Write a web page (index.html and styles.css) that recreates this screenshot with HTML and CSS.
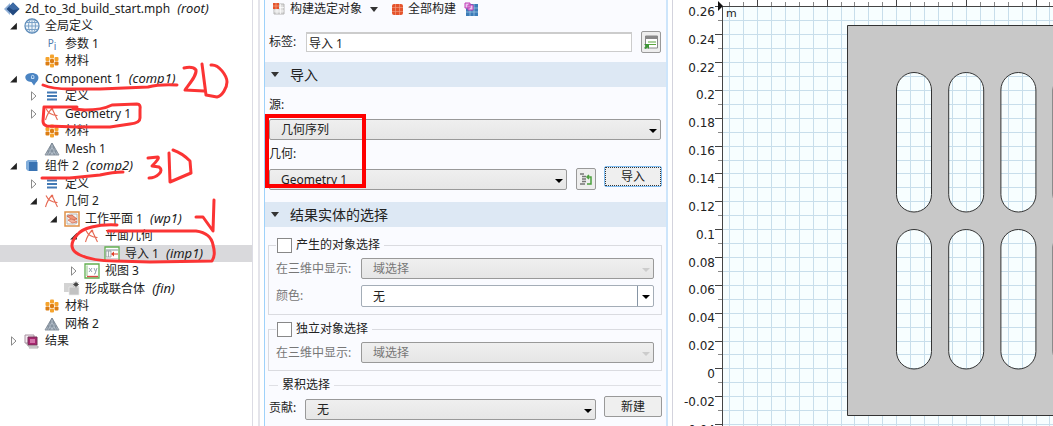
FILE: index.html
```
<!DOCTYPE html>
<html lang="zh-CN">
<head>
<meta charset="utf-8">
<title>2d_to_3d_build_start.mph</title>
<link rel="stylesheet" href="styles.css">
</head>
<body>
<svg class="defs" aria-hidden="true">
  <symbol id="open" viewBox="0 0 8 8"><path d="M7 1V7H1Z" fill="#222"/></symbol>
  <symbol id="closed" viewBox="0 0 8 10"><path d="M2 .8V9.200L6.500 5Z" fill="#fff" stroke="#8a8a8a"/></symbol>
  <symbol id="root" viewBox="0 0 16 16"><path d="M0 8 6 2v12Z" fill="#8fb0d8"/><path d="M9 1.500 15.500 8 9 14.500 2.500 8Z" fill="#234a80"/><path d="M9 1.500 15.500 8 9 9 4.500 6Z" fill="#3d6ba6"/></symbol>
  <symbol id="globe" viewBox="0 0 16 16"><circle cx="8" cy="8" r="7" fill="#edf4fa" stroke="#5b8ab8" stroke-width="1.300"/><path d="M8 1v14M1 8h14M2.500 4.500h11M2.500 11.500h11" stroke="#7ba2c8" fill="none"/><ellipse cx="8" cy="8" rx="3.500" ry="7" fill="none" stroke="#7ba2c8"/></symbol>
  <symbol id="material" viewBox="0 0 16 16"><g fill="#f5a32c"><rect x="6" y="1.500" width="4" height="4" rx="1"/><rect x="1.500" y="4" width="4" height="4" rx="1"/><rect x="10.500" y="4" width="4" height="4" rx="1"/><rect x="6" y="10.500" width="4" height="4" rx="1"/></g><g fill="#dc7d13"><rect x="6" y="6" width="4" height="4" rx="1"/><rect x="1.500" y="8.500" width="4" height="4" rx="1"/><rect x="10.500" y="8.500" width="4" height="4" rx="1"/></g></symbol>
  <symbol id="comp2d" viewBox="0 0 16 16"><path d="M1.500 5C3 1.500 10 1 13 3.500c2.500 2.500 1.500 6-1 8l-2 3-2.500-3.500C3.500 11 .5 8 1.500 5Z" fill="#4b84c2"/><path d="M7.500 7.500V5.500a1.200 1.200 0 0 1 2.400 0v2Z" fill="none" stroke="#cfe4fa" stroke-width=".9"/></symbol>
  <symbol id="defs" viewBox="0 0 16 16"><path d="M3 4.500h10M3 8h10M3 11.500h10" stroke="#4279b4" stroke-width="2"/></symbol>
  <symbol id="geom" viewBox="0 0 16 16"><path d="M1.500 14C3 9 5 5 8 2.500L13.500 14M2 2.500C4 7 8 9.500 13.500 9.500" fill="none" stroke="#e66953" stroke-width="1.100"/><circle cx="8" cy="3" r="1.300" fill="#e66953"/></symbol>
  <symbol id="mesh" viewBox="0 0 16 16"><path d="M8 2 15 14H1Z" fill="#b3bec9" stroke="#8a949f"/><path d="M5.700 6h4.600M3.500 10h9M8 2l5 12M8 2 3 14M5.700 6l4.700 8M10.300 6l-4.700 8M3.500 10 6 14M12.500 10 10 14" stroke="#74828f" stroke-width=".6" fill="none"/></symbol>
  <symbol id="comp3d" viewBox="0 0 16 16"><path d="M2 3.500 4 2h9v9l-2 2H4L2 11Z" fill="#82aedb"/><path d="M5 4h8.500v9H5Z" fill="#3973b3"/></symbol>
  <symbol id="plane" viewBox="0 0 16 16"><path d="M1 1h14v14H1Z" fill="#fff" stroke="#df9148" stroke-width="1.500"/><path d="M3 13V4l3-1h7v9l-2 1Z" fill="#f6f6f6" stroke="#aaa" stroke-width=".8"/><path d="M3 5l5-1 5 4-5 1Z" fill="#ef9679" stroke="#c65238" stroke-width=".7"/><path d="M4 9l4-1 5 3-5 1Z" fill="#f2b49e" stroke="#d3654a" stroke-width=".7"/></symbol>
  <symbol id="import" viewBox="0 0 16 16"><path d="M1 1h14v14H1Z" fill="#fff" stroke="#62ae50" stroke-width="1.300"/><path d="M2 3h12v2H2Z" fill="#c0c8cc"/><path d="M2 5h5v6H2Zm2.500 0v6" fill="#f5f5f5" stroke="#909a9e" stroke-width=".8"/><path d="M7 8l3-2.500v2h4v1h-4v2Z" fill="#df412a"/><path d="M2 12.500h12" stroke="#d0d5d8"/></symbol>
  <symbol id="view" viewBox="0 0 16 16"><path d="M1 1h14v14H1Z" fill="#fff" stroke="#62ae50" stroke-width="1.300"/><path d="M3 2.500V13" stroke="#62ae50" stroke-width=".7"/><path d="M3 13.500h11" stroke="#da4848" stroke-width="1.300"/><path d="m5 5 3 4m0-4L5 9m5-4 1.500 3.500M13 5l-2 6h-1" stroke="#8b98a8" stroke-width=".9" fill="none"/></symbol>
  <symbol id="union" viewBox="0 0 16 16"><path d="M0 2h10v9H0Z" fill="#d3d3d3"/><path d="M5 6h10v8H5Z" fill="#c2c2c2" stroke="#eee" stroke-width=".7"/><path d="M12 .5v6M9 3.500h6M10 1.500l4 4m0-4-4 4" stroke="#555" stroke-width=".8"/><circle cx="12" cy="3.500" r="2" fill="#444"/></symbol>
  <symbol id="result" viewBox="0 0 16 16"><path d="M1 2h9v8H1Z" fill="#f3e8ef" stroke="#a794a2"/><path d="M4 4h9v8H4Z" fill="#a72770" stroke="#733354"/><path d="M6 6h5v4H6Z" fill="#d374a9"/><path d="M2 10l2 3h10v2H5" fill="#e1e1e1" stroke="#999" stroke-width=".8"/></symbol>
</svg>

<main class="app">
  <nav class="tree" aria-label="模型树">
    <ul class="nodes">
      <li class="node level-0"><svg class="icon"><use href="#root"/></svg><span>2d_to_3d_build_start.mph <em>(root)</em></span></li>
      <li class="node level-1"><svg class="toggle"><use href="#open"/></svg><svg class="icon"><use href="#globe"/></svg><span>全局定义</span></li>
      <li class="node level-2 leaf"><span class="icon pi">P<sub>i</sub></span><span>参数 1</span></li>
      <li class="node level-2 leaf"><svg class="icon"><use href="#material"/></svg><span>材料</span></li>
      <li class="node level-1"><svg class="toggle"><use href="#open"/></svg><svg class="icon"><use href="#comp2d"/></svg><span>Component 1 <em>(comp1)</em></span></li>
      <li class="node level-2"><svg class="toggle"><use href="#closed"/></svg><svg class="icon"><use href="#defs"/></svg><span>定义</span></li>
      <li class="node level-2"><svg class="toggle"><use href="#closed"/></svg><svg class="icon"><use href="#geom"/></svg><span>Geometry 1</span></li>
      <li class="node level-2 leaf"><svg class="icon"><use href="#material"/></svg><span>材料</span></li>
      <li class="node level-2 leaf"><svg class="icon"><use href="#mesh"/></svg><span>Mesh 1</span></li>
      <li class="node level-1"><svg class="toggle"><use href="#open"/></svg><svg class="icon"><use href="#comp3d"/></svg><span>组件 2 <em>(comp2)</em></span></li>
      <li class="node level-2"><svg class="toggle"><use href="#closed"/></svg><svg class="icon"><use href="#defs"/></svg><span>定义</span></li>
      <li class="node level-2"><svg class="toggle"><use href="#open"/></svg><svg class="icon"><use href="#geom"/></svg><span>几何 2</span></li>
      <li class="node level-3"><svg class="toggle"><use href="#open"/></svg><svg class="icon"><use href="#plane"/></svg><span>工作平面 1 <em>(wp1)</em></span></li>
      <li class="node level-4"><svg class="toggle"><use href="#open"/></svg><svg class="icon"><use href="#geom"/></svg><span>平面几何</span></li>
      <li class="node level-5 leaf selected"><svg class="icon"><use href="#import"/></svg><span>导入 1 <em>(imp1)</em></span></li>
      <li class="node level-4"><svg class="toggle"><use href="#closed"/></svg><svg class="icon"><use href="#view"/></svg><span>视图 3</span></li>
      <li class="node level-3 leaf"><svg class="icon"><use href="#union"/></svg><span>形成联合体 <em>(fin)</em></span></li>
      <li class="node level-2 leaf"><svg class="icon"><use href="#material"/></svg><span>材料</span></li>
      <li class="node level-2 leaf"><svg class="icon"><use href="#mesh"/></svg><span>网格 2</span></li>
      <li class="node level-1"><svg class="toggle"><use href="#closed"/></svg><svg class="icon"><use href="#result"/></svg><span>结果</span></li>
    </ul>
    <svg class="ink" aria-hidden="true">
      <path d="M43 85Q52 89 70 89L100 89 148 87Q160 84 177 85"/>
      <path d="M184 68Q193 66 196 70C197 75 190 83 185 90L204 91M202 64 206 95M211 65C219 64 227 76 227 82 227 88 222 96 217 97L206 95"/>
      <path d="M44 107 77 107M73 109 85 110Q102 110 112 105L137 104Q141 104 140 110V118Q140 123 130 124L110 127 77 127 47 126Q43 125 43 121L44 107"/>
      <path d="M42 178H70L100 175Q113 172 123 172"/>
      <path d="M148 158 158 157Q160 158 152 166L159 167Q163 170 159 174 155 178 149 178M169 153 170 182M173 150Q182 153 190 161L191 173 170 182"/>
      <path d="M196 217H203L213 231 214 200"/>
      <path d="M117 225C98 224 82 228 77 235 69 244 71 251 80 255 90 260 102 261 115 261L150 262 212 261Q216 255 213 245 211 233 196 231L108 231"/>
    </svg>
  </nav>

  <form class="settings">
    <div class="toolbar">
      <button type="button" class="tool"><svg class="glyph" viewBox="0 0 14 14"><path d="M2 2h10v10H2Z" fill="#dedede" stroke="#b5b5b5"/><path d="M5 2v10M8.500 2v10M2 5.500h10M2 9h10" stroke="#fff" stroke-width=".7"/><path d="M1 1h6v6H1Z" fill="#e4532c"/><path d="M4 1v6M1 4h6" stroke="#f4a488" stroke-width=".7"/></svg>构建选定对象<svg class="caret" viewBox="0 0 8 6"><path d="M0 1h8L4 6Z"/></svg></button>
      <button type="button" class="tool"><svg class="glyph" viewBox="0 0 14 14"><rect x="2" y="2" width="11" height="11" rx="2" fill="#e4532c"/><path d="M5.500 2v11M9.500 2v11M2 5.500h11M2 9.500h11" stroke="#f3a389" stroke-width=".6"/></svg>全部构建</button>
      <button type="button" class="tool" aria-label="构建到预览"><svg class="glyph" viewBox="0 0 14 14"><path d="M2 2h12v12H2Z" fill="#3c7cb7"/><path d="M6 2v12M10 2v12M2 6h12M2 10h12" stroke="#a6cbe8" stroke-width=".7"/><path d="M1 1h5v5H1ZM4 3h5v5H4Z" fill="#e9c8ee" stroke="#c33bb6"/></svg></button>
    </div>

    <div class="line name-line">
      <label for="name">标签:</label>
      <input id="name" class="field" type="text" value="导入 1">
      <button type="button" class="square" aria-label="创建快捷方式"><svg class="glyph" viewBox="0 0 14 14"><path d="M1.500 1h12v12h-12Z" fill="#fff" stroke="#888"/><path d="M1 1h13v3H1Z" fill="#888"/><path d="M4 7h8M4 9.500h8" stroke="#5ca63f" stroke-width="1.200"/><path d="M0 9h5v5L3.500 12.500 1.500 14 0 13 2 11Z" fill="#3d9636"/></svg></button>
    </div>

    <section>
      <h2><svg class="caret" viewBox="0 0 8 6"><path d="M0 0h8L4 5Z"/></svg>导入</h2>
      <div class="body source">
        <label for="source">源:</label>
        <span class="drop"><select id="source"><option>几何序列</option></select></span>
        <label for="geometry">几何:</label>
        <div class="line pick">
          <span class="drop"><select id="geometry"><option>Geometry 1</option></select></span>
          <button type="button" class="square" aria-label="转到源"><svg class="glyph" viewBox="0 0 14 14"><path d="M1 2h4M3 4.500h4M3 7h4M3 9.500h4M1 12h5" stroke="#777" stroke-width="1.500"/><path d="M8 12h4V5H8m2-2L8 5l2 2" fill="none" stroke="#4ba03e" stroke-width="1.500"/></svg></button>
          <button type="button" class="push focused">导入</button>
        </div>
        <div class="highlight"></div>
      </div>
    </section>

    <section>
      <h2><svg class="caret" viewBox="0 0 8 6"><path d="M0 0h8L4 5Z"/></svg>结果实体的选择</h2>
      <div class="body selection">
        <fieldset>
          <legend><label><input type="checkbox">产生的对象选择</label></legend>
          <div class="line"><label class="dim" for="show1">在三维中显示:</label><span class="drop off"><select id="show1" disabled><option>域选择</option></select></span></div>
          <div class="line"><label class="dim" for="color">颜色:</label><span class="drop combo"><select id="color"><option>无</option></select></span></div>
        </fieldset>
        <fieldset>
          <legend><label><input type="checkbox">独立对象选择</label></legend>
          <div class="line"><label class="dim" for="show2">在三维中显示:</label><span class="drop off"><select id="show2" disabled><option>域选择</option></select></span></div>
        </fieldset>
        <h3>累积选择</h3>
        <div class="line pick">
          <label for="contrib">贡献:</label>
          <span class="drop"><select id="contrib"><option>无</option></select></span>
          <button type="button" class="push">新建</button>
        </div>
      </div>
    </section>
  </form>

  <section class="graphics" aria-label="图形">
    <svg id="plot" class="plot"></svg>
  </section>
</main>
<script src="plot.js"></script>
</body>
</html>
```
FILE: styles.css
```
* { box-sizing: border-box; }

body {
  margin: 0;
  background: #fff;
  color: #222;
  font-family: "Noto Sans", "Noto Sans CJK SC", sans-serif;
  font-size: 12px;
  line-height: 18px;
}

button, input, select {
  margin: 0;
  color: inherit;
  font: inherit;
}

.defs { display: none; }

.app {
  display: grid;
  grid-template-columns: 253fr 415fr 385fr;
  height: 100vh;
  overflow: hidden;
}

/* Model tree */
.tree {
  position: relative;
  min-width: 0;
  border-right: 1px solid #dcdce4;
}

.nodes {
  margin: 0;
  padding: 0;
  list-style: none;
}

.node {
  display: flex;
  align-items: center;
  gap: 5px;
  height: 18px;
  padding-left: 8px;
  white-space: pre;
}

.node:nth-child(odd) { height: 17px; }

.node em {
  padding-left: 4px;
  font-size: 13px;
  line-height: 16px;
}

.level-0 { padding-left: 4px; }
.level-2 { padding-left: 28px; }
.level-3 { padding-left: 48px; }
.level-4 { padding-left: 68px; }
.level-5 { padding-left: 88px; }
.leaf::before { content: ""; width: 11px; }
.selected { background: #d9d9dc; }

.toggle {
  flex: none;
  width: 9px;
  height: 10px;
  margin: 0 1px;
}

.icon {
  flex: none;
  width: 16px;
  height: 16px;
}

.pi {
  color: #4f79ad;
  font-size: 10px;
  line-height: 14px;
  text-align: center;
}

.pi sub { font-size: 10px; line-height: 1px; }

.ink {
  position: absolute;
  inset: 0;
  width: 100%;
  height: 100%;
  fill: none;
  stroke: #fb3434;
  stroke-width: 3;
  stroke-linecap: round;
  stroke-linejoin: round;
  pointer-events: none;
}

/* Settings */
.settings {
  min-width: 0;
  margin-left: 5px;
  padding-left: 5px;
  border-left: 2px solid #e4e4ea;
  background: #fafbff;
  border-right: 2px solid #cde5fb;
  box-shadow: inset 4px 0 #fff, inset 5px 0 #9fd2fa;
}

.toolbar {
  display: flex;
  gap: 8px;
  height: 18px;
  padding-left: 7px;
}

.tool {
  display: flex;
  align-items: center;
  gap: 4px;
  padding: 0;
  border: 0;
  background: none;
  white-space: nowrap;
}

.glyph {
  flex: none;
  width: 14px;
  height: 14px;
}

.caret {
  flex: none;
  width: 8px;
  height: 6px;
  fill: #333;
}

.tool .caret { margin: 0 4px; }

.line {
  display: flex;
  align-items: center;
}

.name-line {
  gap: 9px;
  height: 22px;
  margin-top: 13px;
  padding: 0 5px 0 4px;
}

.name-line label,
.pick label { flex: 0 0 28px; }

.field {
  flex: 1;
  min-width: 0;
  height: 20px;
  padding: 0 2px;
  border: 1px solid #ccc;
  border-top: 2px solid #ccc;
  background: #fff;
}

.square {
  display: grid;
  flex: none;
  place-items: center;
  width: 20px;
  height: 22px;
  padding: 0;
  border: 1px solid #999;
  border-radius: 2px;
  background: #eee;
}

h2 {
  display: flex;
  align-items: center;
  gap: 11px;
  height: 25px;
  margin: 0;
  padding-left: 6px;
  background: #dde8f4;
  font-size: 14px;
  font-weight: 400;
}

.name-line + section { margin-top: 9px; }

.body { padding: 0 5px 0 4px; }

.source {
  position: relative;
  display: grid;
  row-gap: 5px;
  padding-top: 9px;
  padding-bottom: 12px;
}

.drop {
  position: relative;
  display: flex;
  flex: 1;
  min-width: 0;
}

.drop::after {
  content: "";
  position: absolute;
  top: 10px;
  right: 4px;
  border: 4px solid transparent;
  border-top: 4px solid #000;
  border-bottom: 0;
  pointer-events: none;
}

.drop select {
  flex: 1;
  min-width: 0;
  height: 21px;
  padding: 0 11px;
  border: 1px solid #999;
  border-radius: 2px;
  background: linear-gradient(#efefef, #e6e6e6);
  line-height: 17px;
  appearance: none;
}

.off select {
  color: #777;
  opacity: 1;
}

.off::after { border-top-color: #ccc; }

.combo select {
  height: 22px;
  border-color: #a4adb7;
  background: linear-gradient(#8695a5, #8695a5) right 15px top / 1px 100% no-repeat, linear-gradient(#fff, #fff);
}

.pick {
  gap: 8px;
  height: 24px;
}

.source .pick { margin-top: -2px; }
.pick .drop,
.pick .square { align-self: flex-end; }
.pick .square { margin-left: 1px; }

.push {
  flex: none;
  align-self: flex-start;
  width: 58px;
  height: 21px;
  margin-right: -1px;
  padding: 0;
  border: 1px solid #999;
  border-radius: 2px;
  background: #efefef;
  line-height: 18px;
}

.focused {
  border: 1px solid #7fbdf2;
  outline: 1px dotted #333;
  outline-offset: -2px;
}

.highlight {
  position: absolute;
  top: 27px;
  left: 0;
  width: 101px;
  height: 74px;
  border: 4px solid #f00;
  pointer-events: none;
}

.selection { padding-top: 10px; }

fieldset {
  display: grid;
  row-gap: 6px;
  min-width: 0;
  margin: 0 -1px 6px;
  padding: 5px 7px 7px;
  border: 1px solid #dadbe0;
}

legend {
  height: 16px;
  padding: 0 4px 0 1px;
  line-height: 16px;
}

legend label {
  display: flex;
  align-items: center;
  gap: 4px;
}

legend input {
  width: 15px;
  height: 15px;
  border: 1px solid #888;
  background: #fff;
  appearance: none;
}

legend input:checked { background: #3c7cb7; }

.dim {
  flex: 0 0 85px;
  color: #777;
}

h3 {
  display: flex;
  align-items: center;
  gap: 4px;
  margin: 0 0 3px;
  font-size: 12px;
  font-weight: 400;
  line-height: 16px;
}

h3::before,
h3::after {
  content: "";
  flex: 1;
  height: 1px;
  background: #dfe0e5;
}

h3::before { flex: 0 0 9px; }

/* Graphics */
.graphics {
  min-width: 0;
  margin-left: 4px;
  border-left: 1px solid #d3d3dd;
}

.plot {
  display: block;
  width: 100%;
  height: 100%;
  font-family: "DejaVu Sans", sans-serif;
  font-size: 12px;
}

.plot text { fill: #222; }
.plot .paper { fill: #f7feff; }
.plot .grid { fill: none; stroke: #c8deeb; }
.plot .axis { fill: none; stroke: #444; }
.plot .minor { fill: none; stroke: #888; }
.plot .arrow { fill: #111; }
.plot .plate { fill: #c8c8c8; fill-rule: evenodd; stroke: #333; }
```
FILE: plot.js
```
(function () {
  var svg = document.getElementById('plot');
  var NS = 'http://www.w3.org/2000/svg';
  var step = 13.925;           // pixels for 0.01 m
  var left = 49.5, top = 6.5;  // corner of the axes
  var zeroY = 368.9;
  var x0 = 84.5;               // first major division

  function add(tag, attrs, text) {
    var el = document.createElementNS(NS, tag);
    Object.keys(attrs).forEach(function (k) { el.setAttribute(k, attrs[k]); });
    if (text) el.textContent = text;
    svg.appendChild(el);
  }

  function snap(v) { return Math.floor(v) + 0.5; }

  // Rounded slot that spans `height`, with semicircular ends
  function slot(x, y, width, height) {
    var r = width / 2, a = 'a' + r + ' ' + r + ' 0 0 1 ';
    return 'M' + x + ' ' + (y + r) + a + width + ' 0v' + (height - width) + a + (-width) + ' 0Z';
  }

  function draw() {
    var w = svg.clientWidth, h = svg.clientHeight, i, x, y;
    var grid = '', major = '', minor = '', plate;
    svg.textContent = '';
    add('rect', { 'class': 'paper', x: left, y: top, width: Math.max(0, w - left), height: Math.max(0, h - top) });

    for (i = -2; x0 + i * step < w; i++) {
      x = snap(x0 + i * step);
      grid += 'M' + x + ' ' + top + 'V' + h;
      if (i % 5 === 0) major += 'M' + x + ' 0V' + top;
      else minor += 'M' + x + ' 2V' + top;
    }
    for (i = 26; zeroY - i * step < h; i--) {
      y = snap(zeroY - i * step);
      grid += 'M' + left + ' ' + y + 'H' + w;
      if (i % 2 === 0) major += 'M42 ' + y + 'H' + left;
      else minor += 'M45 ' + y + 'H' + left;
    }
    add('path', { 'class': 'grid', d: grid });

    plate = 'M174.5 25.5H700V415.500H174.500Z';
    for (i = 0; i < 8; i++) {
      x = 223.5 + i * 52.2;
      plate += slot(x, 72.5, 35, 139.5) + slot(x, 229.5, 35, 139.5);
    }
    add('path', { 'class': 'plate', d: plate });
    add('path', { 'class': 'minor', d: minor });
    add('path', { 'class': 'axis', d: major + 'M' + left + ' ' + top + 'V' + h + 'M42 ' + top + 'H' + w });
    add('path', { 'class': 'arrow', d: 'M45 1 50 6 45 11Z' });

    for (i = 26; zeroY - i * step < h; i -= 2) {
      add('text', { x: 42, y: Math.round(zeroY - i * step) + 9, 'text-anchor': 'end' }, String(i / 100));
    }
    add('text', { x: 53, y: 17, 'font-size': 11 }, 'm');
  }

  draw();
  window.addEventListener('resize', draw);
})();
```
